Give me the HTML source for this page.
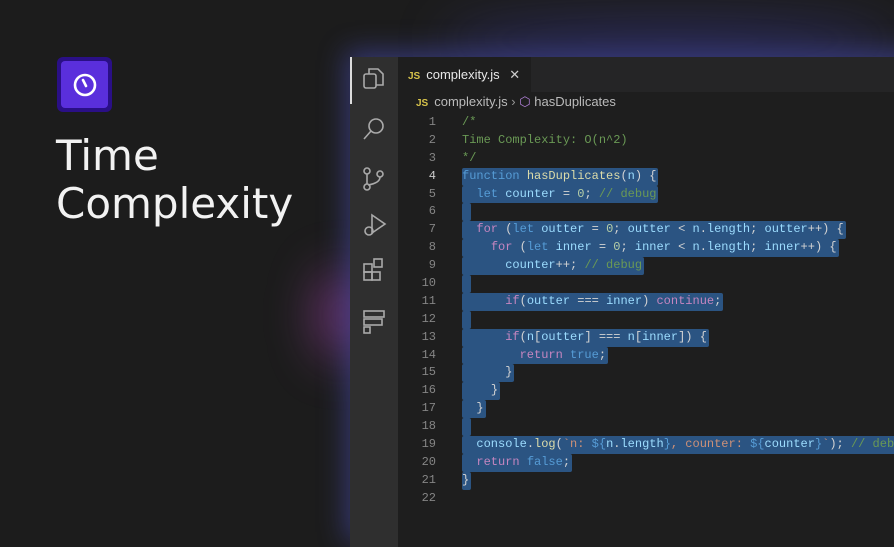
<!DOCTYPE html>
<html><head><meta charset="utf-8"><style>
*{margin:0;padding:0;box-sizing:border-box}
body{width:894px;height:531px;overflow:hidden;background:#1c1c1c;position:relative;font-family:"Liberation Sans",sans-serif}
.glow{position:absolute;border-radius:50%;filter:blur(25px)}
.win{position:absolute;left:350px;top:57px;width:580px;height:490px;background:#1e1e1e;box-shadow:-4px -6px 26px rgba(85,90,220,.45)}
.act{position:absolute;left:0;top:0;width:48px;height:100%;background:#2f2f2f}
.tabs{position:absolute;left:48px;top:0;right:0;height:35px;background:#252526}
.tab{position:absolute;left:0;top:0;width:133px;height:35px;background:#1e1e1e;color:#e8e8e8;font-size:13px;line-height:35px;padding-left:10px}
.js{color:#d7c34a;font-weight:bold;font-size:10px;margin-right:6px}
.bc{position:absolute;left:66px;top:37px;color:#bbb;font-size:13px}
.code{position:absolute;left:0;top:57px;font-family:"Liberation Mono",monospace;font-size:12px}
.l{height:17.9px;line-height:17.9px;white-space:pre;position:relative}
.n{position:absolute;left:48px;width:38px;text-align:right;color:#858585}
.t{position:absolute;left:112px}
.s{background:#2b5482;border-radius:2px;padding-right:2px}
.k{color:#569cd6}.c{color:#c586c0}.f{color:#dcdcaa}.v{color:#9cdcfe}.u{color:#b5cea8}.g{color:#6a9955}.o{color:#ce9178}.w{color:#d4d4d4}
</style></head><body>
<div class="glow" style="left:318px;top:270px;width:45px;height:90px;background:rgba(200,80,210,.5)"></div>
<div class="glow" style="left:440px;top:22px;width:460px;height:35px;background:rgba(70,70,200,.4)"></div>
<div style="position:absolute;left:57px;top:57px;width:55px;height:55px;border-radius:6px;background:#2a0f86;padding:4px"><div style="width:100%;height:100%;background:#5a2fdc;border-radius:4px;display:flex;align-items:center;justify-content:center">
<svg width="28" height="28" viewBox="0 0 28 28"><circle cx="14" cy="14" r="10" fill="none" stroke="#fff" stroke-width="2.6"/><path d="M12 9 L15 15" stroke="#fff" stroke-width="2.6" stroke-linecap="round"/></svg></div></div>
<div style="position:absolute;left:56px;top:132px;color:#f2f2f2;font-family:'DejaVu Sans',sans-serif;font-size:42px;line-height:48px;letter-spacing:0px">Time<br>Complexity</div>
<div class="win">
<div class="act">
<div style="position:absolute;left:0;top:0;width:2px;height:47px;background:#ddd"></div>
<svg width="48" height="300" viewBox="0 0 48 300" fill="none" stroke="#aaa" stroke-width="1.6">
<rect x="14" y="17" width="12" height="14" rx="2"/><path d="M19 17 V12 h9 l5 5 v11 h-7"/>
<circle cx="26" cy="69" r="7"/><path d="M21 74 l-7 8"/>
<circle cx="17" cy="114" r="3"/><circle cx="17" cy="130" r="3"/><circle cx="30" cy="117" r="3"/><path d="M17 117 v10 M30 120 q0 6 -12 8"/>
<path d="M22 158 l13 9 l-13 9 z"/><circle cx="19" cy="174" r="4"/>
<rect x="14" y="215" width="8" height="8"/><rect x="22" y="215" width="8" height="8"/><rect x="14" y="207" width="8" height="8"/><rect x="24" y="202" width="8" height="8"/>
<rect x="14" y="254" width="20" height="6"/><rect x="14" y="262" width="18" height="6"/><rect x="14" y="270" width="6" height="6"/>
</svg></div>
<div class="tabs"><div class="tab"><span class="js">JS</span>complexity.js <span style="margin-left:6px;color:#ccc">✕</span></div></div>
<div class="bc"><span class="js">JS</span>complexity.js <span style="color:#999">›</span> <span style="color:#b180d7">⬡</span> hasDuplicates</div>
<div class="code">
<div class="l"><span class="n">1</span><span class="t g">/*</span></div>
<div class="l"><span class="n">2</span><span class="t g">Time Complexity: O(n^2)</span></div>
<div class="l"><span class="n">3</span><span class="t g">*/</span></div>
<div class="l"><span class="n" style="color:#ccc">4</span><span class="t s"><span class="k">function</span> <span class="f">hasDuplicates</span><span class="w">(</span><span class="v">n</span><span class="w">) {</span></span></div>
<div class="l"><span class="n">5</span><span class="t s">  <span class="k">let</span> <span class="v">counter</span> <span class="w">=</span> <span class="u">0</span><span class="w">;</span> <span class="g">// debug</span></span></div>
<div class="l"><span class="n">6</span><span class="t s"> </span></div>
<div class="l"><span class="n">7</span><span class="t s">  <span class="c">for</span> <span class="w">(</span><span class="k">let</span> <span class="v">outter</span> <span class="w">=</span> <span class="u">0</span><span class="w">;</span> <span class="v">outter</span> <span class="w">&lt;</span> <span class="v">n</span><span class="w">.</span><span class="v">length</span><span class="w">;</span> <span class="v">outter</span><span class="w">++) {</span></span></div>
<div class="l"><span class="n">8</span><span class="t s">    <span class="c">for</span> <span class="w">(</span><span class="k">let</span> <span class="v">inner</span> <span class="w">=</span> <span class="u">0</span><span class="w">;</span> <span class="v">inner</span> <span class="w">&lt;</span> <span class="v">n</span><span class="w">.</span><span class="v">length</span><span class="w">;</span> <span class="v">inner</span><span class="w">++) {</span></span></div>
<div class="l"><span class="n">9</span><span class="t s">      <span class="v">counter</span><span class="w">++;</span> <span class="g">// debug</span></span></div>
<div class="l"><span class="n">10</span><span class="t s"> </span></div>
<div class="l"><span class="n">11</span><span class="t s">      <span class="c">if</span><span class="w">(</span><span class="v">outter</span> <span class="w">===</span> <span class="v">inner</span><span class="w">)</span> <span class="c">continue</span><span class="w">;</span></span></div>
<div class="l"><span class="n">12</span><span class="t s"> </span></div>
<div class="l"><span class="n">13</span><span class="t s">      <span class="c">if</span><span class="w">(</span><span class="v">n</span><span class="w">[</span><span class="v">outter</span><span class="w">] === </span><span class="v">n</span><span class="w">[</span><span class="v">inner</span><span class="w">]) {</span></span></div>
<div class="l"><span class="n">14</span><span class="t s">        <span class="c">return</span> <span class="k">true</span><span class="w">;</span></span></div>
<div class="l"><span class="n">15</span><span class="t s">      <span class="w">}</span></span></div>
<div class="l"><span class="n">16</span><span class="t s">    <span class="w">}</span></span></div>
<div class="l"><span class="n">17</span><span class="t s">  <span class="w">}</span></span></div>
<div class="l"><span class="n">18</span><span class="t s"> </span></div>
<div class="l"><span class="n">19</span><span class="t s">  <span class="v">console</span><span class="w">.</span><span class="f">log</span><span class="w">(</span><span class="o">`n: </span><span class="k">${</span><span class="v">n</span><span class="w">.</span><span class="v">length</span><span class="k">}</span><span class="o">, counter: </span><span class="k">${</span><span class="v">counter</span><span class="k">}</span><span class="o">`</span><span class="w">);</span> <span class="g">// debug</span></span></div>
<div class="l"><span class="n">20</span><span class="t s">  <span class="c">return</span> <span class="k">false</span><span class="w">;</span></span></div>
<div class="l"><span class="n">21</span><span class="t s"><span class="w">}</span></span></div>
<div class="l"><span class="n">22</span></div>
</div></div>
</body></html>
